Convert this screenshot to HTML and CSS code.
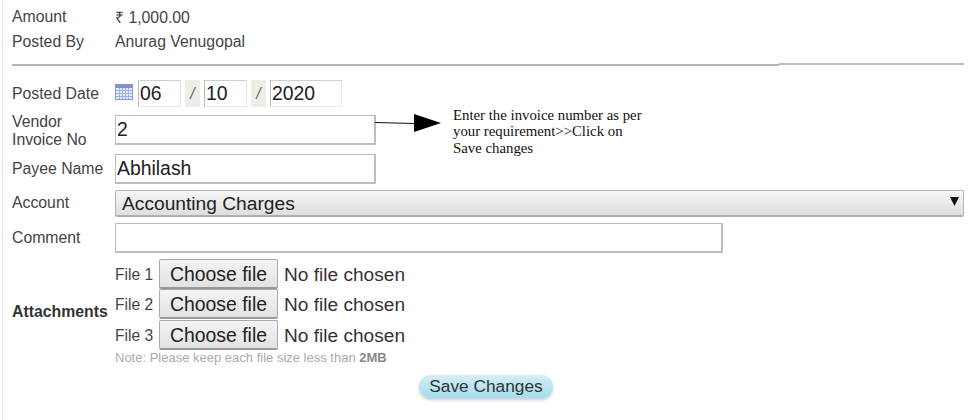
FILE: index.html
```html
<!DOCTYPE html>
<html lang="en">
<head>
    <meta charset="UTF-8">
    <meta name="viewport" content="width=device-width, initial-scale=1.0">
    <title>Edit Bill</title>
    <link rel="stylesheet" href="styles.css">
</head>
<body>
    <div class="page">
        <!-- SUMMARY -->
        <div class="summary">
            <div class="summary-row"><span class="label">Amount</span><span>₹ 1,000.00</span></div>
            <div class="summary-row"><span class="label">Posted By</span><span>Anurag Venugopal</span></div>
        </div>
        <div class="divider"><span class="divider-left"></span><span class="divider-right"></span></div>

        <!-- FORM -->
        <form class="bill-form" onsubmit="return false">
            <div class="form-row date-row">
                <label class="label">Posted Date</label>
                <div class="date-fields">
                    <svg class="calendar" width="18" height="16" viewBox="0 0 18 16">
                        <rect x="0.5" y="0.5" width="17" height="15" fill="#e3e9fc" stroke="#8b9ac4"/>
                        <rect x="1" y="1" width="16" height="3" fill="#7f93c6"/>
                        <path d="M4.5 4v11M7.5 4v11M10.5 4v11M13.5 4v11M1 6.5h16M1 9.5h16M1 12.5h16" stroke="#a3b3ee" stroke-width="1" fill="none"/>
                    </svg>
                    <input class="date-part day" type="text" value="06">
                    <span class="date-sep">/</span>
                    <input class="date-part month" type="text" value="10">
                    <span class="date-sep">/</span>
                    <input class="date-part year" type="text" value="2020">
                </div>
            </div>

            <div class="form-row vendor-row">
                <label class="label">Vendor<br>Invoice No</label>
                <input class="text-field short" type="text" value="2">
            </div>

            <div class="form-row payee-row">
                <label class="label">Payee Name</label>
                <input class="text-field short" type="text" value="Abhilash">
            </div>

            <div class="form-row account-row">
                <label class="label raised">Account</label>
                <div class="select-wrap">
                    <select class="account-select">
                        <option>Accounting Charges</option>
                    </select>
                    <svg class="select-arrow" width="9" height="9" viewBox="0 0 9 9"><path d="M0 0h9L4.5 9z" fill="#111"/></svg>
                </div>
            </div>

            <div class="form-row comment-row">
                <label class="label comment-label">Comment</label>
                <input class="text-field comment" type="text">
            </div>

            <div class="form-row attach-row">
                <label class="label strong">Attachments</label>
                <div class="files">
                    <div class="file-row"><span class="file-name">File 1</span><button class="file-btn" type="button">Choose file</button><span class="file-status">No file chosen</span></div>
                    <div class="file-row"><span class="file-name">File 2</span><button class="file-btn" type="button">Choose file</button><span class="file-status">No file chosen</span></div>
                    <div class="file-row"><span class="file-name">File 3</span><button class="file-btn" type="button">Choose file</button><span class="file-status">No file chosen</span></div>
                </div>
            </div>
            <p class="note">Note: Please keep each file size less than <b>2MB</b></p>

            <div class="actions">
                <button class="save-btn" type="submit">Save Changes</button>
            </div>
        </form>

        <!-- ANNOTATION OVER THE FORM -->
        <div class="callout">
            <svg class="callout-arrow" width="66" height="18" viewBox="0 0 66 18">
                <path d="M0 8.5L40 9.5" stroke="#111" stroke-width="1"/>
                <path d="M39 0L66 9L39 18z" fill="#000"/>
            </svg>
            <p class="callout-text">Enter the invoice number as per your requirement&gt;&gt;Click on Save changes</p>
        </div>
    </div>
</body>
</html>
```

FILE: styles.css
```css
/* General Styles */
html, body {
    margin: 0;
    height: 100%;
    background: #fff;
    overflow: hidden;
}

body {
    font-family: "Liberation Sans", Arial, sans-serif;
    font-size: 15.8px;
    color: #444;
}

.page {
    position: relative;
    height: 420px;
    box-sizing: border-box;
    margin-left: 2px;
    padding: 4px 11px 0 9px;
    border-left: 1px solid #e4e4e4;
}

/* Summary */
.summary-row {
    display: flex;
    height: 25px;
    align-items: center;
}

.summary-row .label {
    width: 103px;
}

.divider {
    display: flex;
    margin-top: 9px;
}

.divider-left {
    width: 767px;
    height: 2px;
    margin-top: 1px;
    background: #b4b4b4;
}

.divider-right {
    flex: 1;
    height: 2px;
    background: #bbb;
}

/* Form Rows */
.bill-form {
    margin: 0;
}

.form-row {
    display: flex;
    align-items: center;
}

.label {
    flex: none;
    width: 103px;
    color: #444;
}

.raised {
    padding-bottom: 2px;
}

.comment-label {
    padding-bottom: 1px;
}

.strong {
    font-weight: bold;
    color: #333;
}

.date-row {
    margin-top: 14px;
    height: 27px;
}

.date-fields {
    display: flex;
    align-items: center;
}

.calendar {
    margin-right: 5px;
    margin-bottom: 3px;
}

input {
    font-family: "Liberation Sans", Arial, sans-serif;
    box-sizing: border-box;
    color: #222;
    outline: none;
}

.date-part {
    height: 27px;
    padding: 0 0 0 1px;
    font-size: 19.4px;
    border: 1px solid #e6e6e6;
    border-left: 1px solid #b9b9b9;
    border-top: 1px solid #cfcfcf;
    background: #fff;
}

.day, .month {
    width: 43px;
}

.year {
    width: 72px;
}

.date-sep {
    width: 15px;
    height: 27px;
    margin: 0 4px;
    background: #ecefe8;
    color: #666;
    text-align: center;
    line-height: 27px;
    font-size: 15.8px;
    font-style: italic;
}

.text-field {
    height: 30px;
    padding: 0 1px;
    font-size: 19.4px;
    border: 2px solid #bdbdbd;
    border-width: 1px 2px 2px 1px;
    background: #fff;
}

.short {
    width: 261px;
}

.comment {
    width: 608px;
}

.vendor-row {
    margin-top: 8px;
    height: 30px;
    line-height: 18px;
}

.vendor-row .label {
    padding-top: 2px;
}

.payee-row {
    margin-top: 9px;
    height: 30px;
}

/* Select */
.account-row {
    margin-top: 6px;
    height: 27px;
}

.select-wrap {
    position: relative;
    flex: 1;
    height: 27px;
}

.account-select {
    display: block;
    width: 100%;
    height: 27px;
    padding: 0 0 0 6px;
    appearance: none;
    font-family: "Liberation Sans", Arial, sans-serif;
    font-size: 19.2px;
    color: #222;
    border: 1px solid #b5b5b5;
    border-bottom: 2px solid #b0b0b0;
    border-radius: 2px;
    background: linear-gradient(#f6f6f6, #dedede);
}

.select-arrow {
    position: absolute;
    top: 7px;
    right: 5px;
}

.comment-row {
    margin-top: 6px;
    height: 30px;
}

/* Attachments */
.attach-row {
    margin-top: 6px;
}

.attach-row .label {
    padding-top: 16px;
}

.file-row {
    display: flex;
    align-items: center;
    height: 30.3px;
}

.file-name {
    width: 44px;
    padding-top: 2px;
    font-size: 15.6px;
}

.file-btn {
    box-sizing: border-box;
    width: 119px;
    height: 30px;
    padding: 2px 0 0;
    font-family: "Liberation Sans", Arial, sans-serif;
    font-size: 19.4px;
    color: #222;
    border: 1px solid #aaa;
    border-bottom: 2px solid #999;
    border-radius: 2px;
    background: linear-gradient(#f4f4f4, #e2e2e2);
}

.file-status {
    margin-left: 6px;
    padding-top: 2px;
    font-size: 19.1px;
    color: #333;
}

.note {
    margin: 1px 0 0 103px;
    font-size: 13px;
    line-height: 14px;
    color: #aaa;
}

.note b {
    color: #888;
}

/* Save Button */
.actions {
    margin-top: 10px;
    padding-left: 407px;
}

.save-btn {
    display: block;
    width: 134px;
    height: 23px;
    padding: 0;
    font-family: "Liberation Sans", Arial, sans-serif;
    font-size: 17.3px;
    color: #333;
    border: none;
    border-radius: 12px;
    background: linear-gradient(#d3eef6, #a5dcec);
    box-shadow: 0 2px 3px rgba(0, 0, 0, 0.2);
}

/* Annotation */
.callout-arrow {
    position: absolute;
    left: 372px;
    top: 114px;
}

.callout-text {
    position: absolute;
    left: 450px;
    top: 106.5px;
    width: 196px;
    margin: 0;
    font-family: "Liberation Serif", "Times New Roman", serif;
    font-size: 14.8px;
    line-height: 16.5px;
    color: #111;
}
```
